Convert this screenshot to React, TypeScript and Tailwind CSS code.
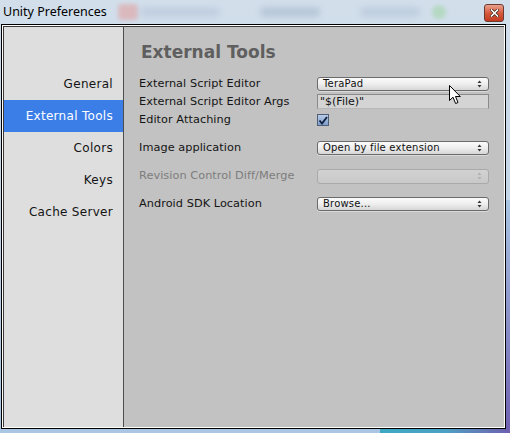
import React from "react";

const sideItems = ["General", "External Tools", "Colors", "Keys", "Cache Server"];

function UpDown({ faint = false }: { faint?: boolean }) {
  const c = faint ? "#b0b0b0" : "#333333";
  return (
    <svg width="5" height="8" viewBox="0 0 5 8" className="shrink-0">
      <path d="M2.5 0.5 L4.5 3 L0.5 3 Z" fill={c} />
      <path d="M2.5 7.5 L4.5 5 L0.5 5 Z" fill={c} />
    </svg>
  );
}

function Popup({ value, disabled = false }: { value?: string; disabled?: boolean }) {
  return (
    <div
      className={
        disabled
          ? "w-[172px] h-[15px] rounded-[3px] border border-[#a9a9a9] bg-gradient-to-b from-[#d2d2d2] to-[#c9c9c9] flex items-center justify-between pl-[5px] pr-[6px]"
          : "w-[172px] h-[14px] rounded-[3px] border border-[#6b6b6b] bg-gradient-to-b from-[#fbfbfb] via-[#eeeeee] to-[#d6d6d6] flex items-center justify-between pl-[5px] pr-[6px] shadow-[0_1px_0_rgba(255,255,255,0.4)]"
      }
    >
      <span className="text-[10px] leading-none text-[#111] tracking-[0.2px]">{value}</span>
      <UpDown faint={disabled} />
    </div>
  );
}

function Row({ label, children, className = "", disabled = false }: { label: string; children: React.ReactNode; className?: string; disabled?: boolean }) {
  return (
    <div className={`flex items-center ${className}`}>
      <div className={`w-[178px] text-[11.3px] leading-none tracking-[0.05px] ${disabled ? "text-[#7d7d7d]" : "text-[#141414]"}`}>{label}</div>
      {children}
    </div>
  );
}

export default function App() {
  return (
    <div
      className="relative w-[510px] h-[433px] overflow-hidden bg-gradient-to-b from-[#d2dfeb] via-[#c3d5e7] to-[#a9c6e2]"
      style={{ fontFamily: '"DejaVu Sans", Verdana, sans-serif' }}
    >
      {/* blurred desktop behind the glass */}
      <div className="absolute left-[118px] top-[4px] w-[20px] h-[16px] rounded bg-[#e0a0a0] opacity-60 blur-[2px]" />
      <div className="absolute left-[140px] top-[7px] w-[80px] h-[10px] rounded bg-[#b9c8dc] opacity-70 blur-[3px]" />
      <div className="absolute left-[260px] top-[7px] w-[60px] h-[10px] rounded bg-[#a8b8cc] opacity-60 blur-[3px]" />
      <div className="absolute left-[360px] top-[7px] w-[60px] h-[10px] rounded bg-[#b3c3d6] opacity-60 blur-[3px]" />
      <div className="absolute left-[432px] top-[5px] w-[14px] h-[14px] rounded-full bg-[#a8d6b0] opacity-70 blur-[2px]" />
      <div className="absolute left-[380px] top-[428px] w-[130px] h-[5px] bg-gradient-to-r from-[#3ea9c2] via-[#4aa0c4] to-[#6a5fae]" />
      <div className="absolute right-0 top-[200px] w-[4px] h-[233px] bg-gradient-to-b from-[#a9c6e2] to-[#6f60b0]" />

      {/* title bar */}
      <div className="relative h-[24px] flex items-center justify-between pl-[3px] pr-[6px]">
        <span className="text-[12.5px] text-black leading-none" style={{ fontFamily: '"Noto Sans", "Open Sans", sans-serif' }}>
          Unity Preferences
        </span>
        <div className="w-[20px] h-[18px] mt-[2px] rounded-[3px] border border-[#6b3a30] bg-gradient-to-b from-[#eaa08c] via-[#d7593d] to-[#c23b1f] flex items-center justify-center">
          <svg width="9" height="8" viewBox="0 0 9 8">
            <path d="M1.5 1 L7.5 7 M7.5 1 L1.5 7" stroke="#3a2018" strokeWidth="3" strokeLinecap="square" />
            <path d="M1.5 1 L7.5 7 M7.5 1 L1.5 7" stroke="#ffffff" strokeWidth="1.6" strokeLinecap="square" />
          </svg>
        </div>
      </div>

      {/* window frame */}
      <div className="relative ml-[1px] w-[505px] h-[405px] border border-black">
        <div className="w-full h-full border border-white">
          <div className="w-full h-full border-l border-t border-[#3a3a3a] flex">
            {/* sidebar */}
            <div className="w-[119px] h-full bg-[#dedede] pt-[41px] flex flex-col">
              {sideItems.map((item) => (
                <div
                  key={item}
                  className={`h-[32px] flex items-center justify-end pr-[10px] text-[12px] tracking-[0.3px] ${
                    item === "External Tools" ? "bg-[#3b7ee8] text-white" : "text-[#141414]"
                  }`}
                >
                  {item}
                </div>
              ))}
            </div>
            <div className="w-[1px] h-full bg-[#4e4e4e]" />

            {/* main */}
            <div className="flex-1 h-full bg-[#c2c2c2] pl-[15px] pt-[15px]">
              <h1 className="ml-[2px] text-[17px] leading-[20px] font-bold text-[#5f5f5f]">External Tools</h1>
              <Row label="External Script Editor" className="mt-[14px] h-[16px]">
                <Popup value="TeraPad" />
              </Row>
              <Row label="External Script Editor Args" className="h-[19px]">
                <div className="w-[172px] h-[15px] border border-[#8a8a8a] border-b-[#b8b8b8] bg-[#d4d4d4] flex items-center pl-[2px]">
                  <span className="text-[11px] leading-none text-[#111]">"$(File)"</span>
                </div>
              </Row>
              <Row label="Editor Attaching" className="h-[18px]">
                <div className="w-[12px] h-[12px] border border-[#4f5f78] bg-gradient-to-b from-[#b9cde8] to-[#7f9dcc] flex items-center justify-center">
                  <svg width="10" height="9" viewBox="0 0 10 9">
                    <path d="M1.5 4.5 L4 7.5 L9 1" stroke="#10203c" strokeWidth="1.8" fill="none" />
                  </svg>
                </div>
              </Row>
              <Row label="Image application" className="mt-[11px] h-[16px]">
                <Popup value="Open by file extension" />
              </Row>
              <Row label="Revision Control Diff/Merge" className="mt-[12px] h-[16px]" disabled>
                <Popup disabled />
              </Row>
              <Row label="Android SDK Location" className="mt-[12px] h-[16px]">
                <Popup value="Browse..." />
              </Row>
            </div>
          </div>
        </div>
      </div>

      {/* mouse cursor */}
      <svg className="absolute left-[449px] top-[85px]" width="13" height="20" viewBox="0 0 13 20">
        <path
          d="M0.5 0.5 L0.5 15.5 L4 12.2 L6.6 18.5 L9 17.5 L6.5 11.5 L11.3 11.5 Z"
          fill="#ffffff"
          stroke="#000000"
          strokeWidth="1"
          strokeLinejoin="round"
        />
      </svg>
    </div>
  );
}
